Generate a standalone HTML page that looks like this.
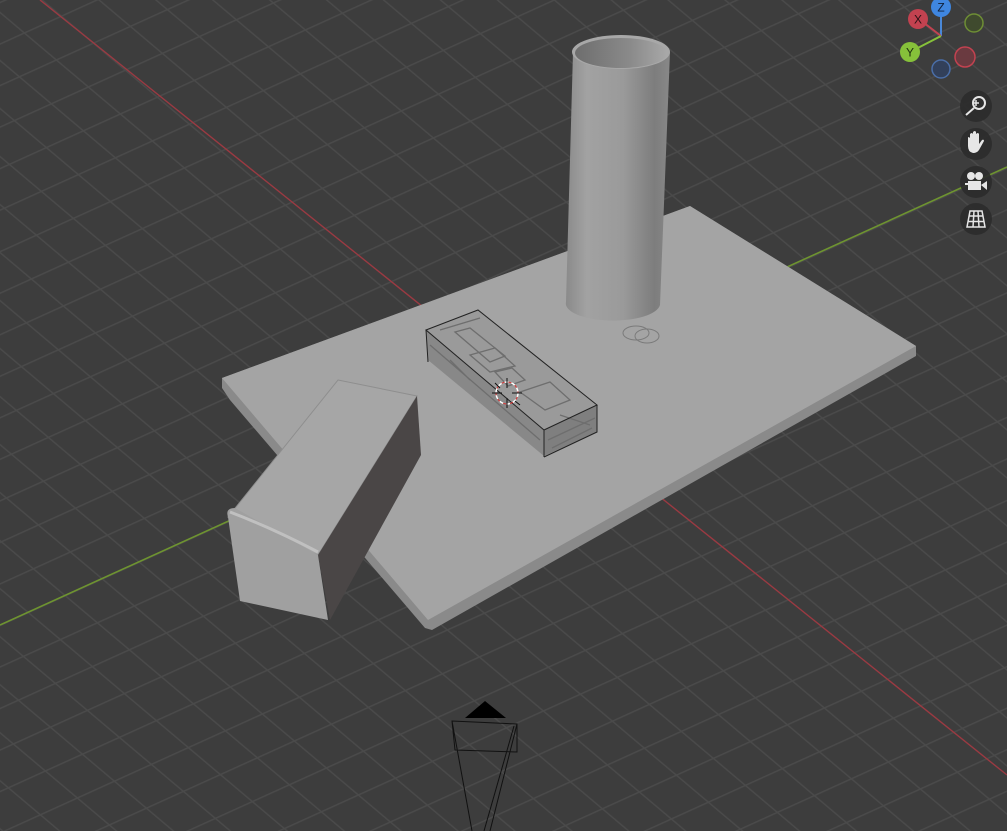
<!DOCTYPE html>
<html><head><style>
html,body{margin:0;padding:0;background:#3d3d3d;width:1007px;height:831px;overflow:hidden}
svg{display:block}
</style></head><body>
<svg width="1007" height="831" viewBox="0 0 1007 831" xmlns="http://www.w3.org/2000/svg">
<defs>
<pattern id="g" patternUnits="userSpaceOnUse" width="1" height="1" patternTransform="matrix(32 27 37 -16.8 508 394)">
<rect x="0" y="0" width="1" height="0.04" fill="#4a4a4a"/>
<rect x="0" y="0" width="0.04" height="1" fill="#4a4a4a"/>
</pattern>
<linearGradient id="cyl" x1="0" x2="1" y1="0" y2="0">
<stop offset="0" stop-color="#8a8a8a"/><stop offset="0.2" stop-color="#a2a2a2"/><stop offset="0.55" stop-color="#9a9a9a"/><stop offset="0.85" stop-color="#7d7d7d"/><stop offset="1" stop-color="#888"/>
</linearGradient>
<linearGradient id="inner" x1="0" x2="1"><stop offset="0" stop-color="#6e6e6e"/><stop offset="0.6" stop-color="#8a8a8a"/><stop offset="1" stop-color="#a8a8a8"/></linearGradient>
</defs>
<rect width="1007" height="831" fill="#3d3d3d"/>
<rect width="1007" height="831" fill="url(#g)"/>
<!-- axes -->
<line x1="40" y1="0" x2="1007" y2="775" stroke="#9a3a42" stroke-width="1.4"/>
<line x1="0" y1="625" x2="1007" y2="167" stroke="#6e9430" stroke-width="1.6"/>
<!-- plate -->
<polygon points="222,378 690,206 916,346 916,356 432,630 425,628 230,400 222,388" fill="#8a8a8a"/>
<polygon points="222,378 690,206 916,346 428,620" fill="#a4a4a4"/>
<!-- cylinder -->
<path d="M573,52 L566,302 A47,17 0 0 0 660,305 L670,52 Z" fill="url(#cyl)"/>
<ellipse cx="621" cy="52" rx="49" ry="17" fill="#a8a8a8"/>
<ellipse cx="621" cy="53" rx="46" ry="15" fill="url(#inner)"/>
<!-- small coins -->
<ellipse cx="636" cy="333" rx="13" ry="7" fill="none" stroke="#7a7a7a"/>
<ellipse cx="647" cy="336" rx="12" ry="7" fill="none" stroke="#7a7a7a"/>
<!-- box -->
<polygon points="338,380 417,396 318,555 228,517" fill="#a6a6a6" stroke="#8e8e8e"/>
<polygon points="417,396 421,455 330,620 318,555" fill="#4a4646"/>
<path d="M228,517 Q225,508 235,508 L318,555 L328,620 L240,601 Z" fill="#a0a0a0"/>
<path d="M230,512 Q272,528 318,552" stroke="#c0c0c0" stroke-width="3" fill="none"/>
<!-- detailed object -->
<polygon points="426,330 478,310 597,405 544,430" fill="#9a9a9a"/>
<polygon points="426,330 544,430 544,456 428,360" fill="#888"/>
<polygon points="544,430 597,405 597,432 544,456" fill="#7f7f7f"/>
<g fill="none" stroke="#6e6e6e" stroke-width="1.3">
<path d="M455,332 L470,328 L505,356 L490,362 Z"/>
<path d="M470,355 L495,348 L515,366 L490,372 Z"/>
<path d="M495,372 L512,368 L525,380 L508,386 Z"/>
<path d="M520,392 L550,382 L570,400 L545,410 Z"/>
<path d="M430,345 L540,440 M560,415 L590,425 M450,360 L470,380 M440,330 L480,318 M548,440 L595,418 M552,448 L592,428"/>
</g>
<g fill="none" stroke="#222" stroke-width="1">
<path d="M426,330 L478,310 L597,405 L544,430 Z M426,330 L428,362 M544,430 L544,457 M597,405 L597,432 L544,457"/>
</g>
<!-- 3d cursor -->
<circle cx="507" cy="393" r="11" fill="none" stroke="#fff" stroke-width="1.5" stroke-dasharray="4 3"/>
<circle cx="507" cy="393" r="11" fill="none" stroke="#d33" stroke-width="1" stroke-dasharray="3 4" stroke-dashoffset="3"/>
<path d="M507,378 V388 M507,398 V408 M492,393 H502 M512,393 H522 M495,383 L500,388 M515,401 L520,405" stroke="#111" stroke-width="1"/>
<!-- camera -->
<polygon points="465,718 485,701 506,718" fill="#000"/>
<path d="M452,721 L517,724 L517,752 L455,750 Z M452,721 L472,831 M517,724 L490,831 M514,726 L484,831" stroke="#111" fill="none" stroke-width="1"/>
<!-- gizmo -->
<line x1="941" y1="36" x2="941" y2="8" stroke="#4a88d8" stroke-width="2"/>
<line x1="941" y1="36" x2="919" y2="19" stroke="#c24250" stroke-width="2"/>
<line x1="941" y1="36" x2="910" y2="52" stroke="#86c13a" stroke-width="2"/>
<circle cx="974" cy="23" r="9" fill="#3f4a2e" stroke="#6e8e35" stroke-width="1.5"/>
<circle cx="965" cy="57" r="10" fill="#6a3a40" stroke="#c24250" stroke-width="1.5"/>
<circle cx="941" cy="69" r="9" fill="#32405a" stroke="#4a6ea8" stroke-width="1.5"/>
<circle cx="918" cy="19" r="10" fill="#c24250"/>
<text x="918" y="23.5" font-family="Liberation Sans,sans-serif" font-size="12" fill="#2a1015" text-anchor="middle">X</text>
<circle cx="941" cy="7" r="10" fill="#3f86e0"/>
<text x="941" y="11.5" font-family="Liberation Sans,sans-serif" font-size="12" fill="#10203a" text-anchor="middle">Z</text>
<circle cx="910" cy="52" r="10" fill="#86c13a"/>
<text x="910" y="56.5" font-family="Liberation Sans,sans-serif" font-size="12" fill="#203010" text-anchor="middle">Y</text>
<!-- nav buttons -->
<g fill="#2c2c2c" opacity="0.9">
<circle cx="976" cy="106" r="16"/><circle cx="976" cy="144" r="16"/><circle cx="976" cy="182" r="16"/><circle cx="976" cy="219" r="16"/>
</g>
<g stroke="#e6e6e6" fill="none" stroke-width="2">
<circle cx="979" cy="103" r="6"/><line x1="974" y1="108" x2="966" y2="115"/>
<path d="M976,100 V106 M973,103 H979" stroke-width="1.5"/>
</g>
<path d="M968,146 V138 Q968,136 970,138 V143 V134 Q972,132 973,134 V142 V132 Q975,130 976,132 V142 V134 Q978,132 979,134 V144 L982,140 Q984,139 984,141 L979,150 Q977,153 973,153 Q968,152 968,146 Z" fill="#e6e6e6"/>
<g fill="#e6e6e6"><circle cx="971" cy="176" r="4"/><circle cx="979" cy="176" r="4"/><rect x="968" y="181" width="13" height="9"/><polygon points="981,185 987,181 987,190"/><rect x="965" y="183" width="4" height="2"/></g>
<g stroke="#e6e6e6" fill="none" stroke-width="1.5">
<path d="M970,211 H982 L985,227 H967 Z M968.5,216 H983.5 M967.5,221.5 H984.5 M974,211 L973,227 M978,211 L979,227"/>
</g>
</svg>
</body></html>
